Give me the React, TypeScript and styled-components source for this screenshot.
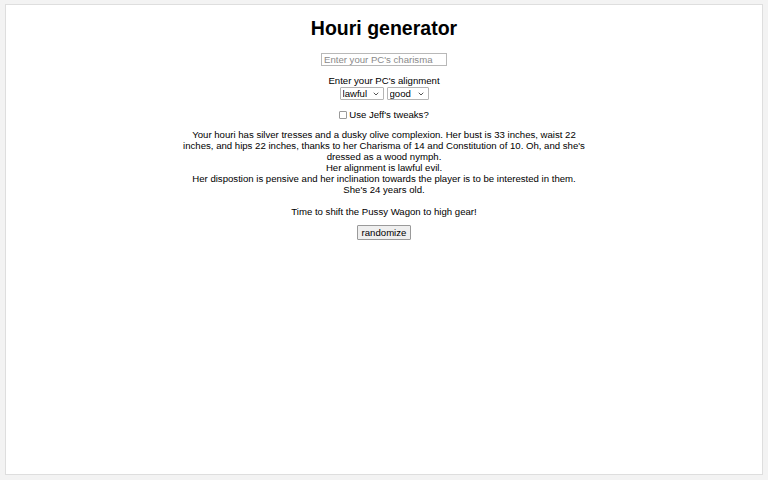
import React, { useState } from 'react';
import styled, { createGlobalStyle } from 'styled-components';
import { ChevronDown } from 'lucide-react';

const GlobalStyle = createGlobalStyle`
  html, body {
    margin: 0;
    padding: 0;
    background: #f3f3f3;
  }
  body {
    font-family: "Liberation Sans", Arial, sans-serif;
    font-size: 9.6px;
    color: #000;
  }
`;

const Page = styled.div`
  padding: 4px 5px 5px;
  height: 480px;
  box-sizing: border-box;
`;

const Panel = styled.main`
  background: #fff;
  border: 1px solid #dedede;
  height: 100%;
  box-sizing: border-box;
  display: flex;
  flex-direction: column;
  align-items: center;
  text-align: center;
  padding-top: 12px;
`;

const Title = styled.h1`
  font-size: 19.5px;
  font-weight: bold;
  margin: 0 0 13px;
`;

const CharismaInput = styled.input`
  font-family: inherit;
  font-size: 9.6px;
  width: 126px;
  height: 13px;
  box-sizing: border-box;
  border: 1px solid #b8b8b8;
  padding: 0 2px;
  margin-bottom: 9px;
  &::placeholder {
    color: #8a8a8a;
  }
`;

const Field = styled.div`
  margin-bottom: 9px;
  line-height: 11px;
`;

const SelectRow = styled.div`
  display: flex;
  justify-content: center;
  gap: 3px;
  margin-top: 1px;
`;

const SelectWrap = styled.span<{ $w: number }>`
  position: relative;
  display: inline-block;
  width: ${(p) => p.$w}px;
  height: 13px;

  svg {
    position: absolute;
    right: 4px;
    top: 3px;
    width: 8px;
    height: 8px;
    pointer-events: none;
    color: #333;
  }
`;

const Select = styled.select`
  appearance: none;
  font-family: inherit;
  font-size: 9.6px;
  width: 100%;
  height: 13px;
  line-height: 11px;
  border: 1px solid #b5b5b5;
  border-radius: 1px;
  background: #fff;
  padding: 0 0 0 2px;
  margin: 0;
  color: #000;
`;

const CheckRow = styled.label`
  display: flex;
  align-items: center;
  gap: 2px;
  margin-bottom: 9px;
  line-height: 11px;
`;

const Box = styled.input`
  appearance: none;
  width: 8px;
  height: 8px;
  margin: 0;
  border: 1px solid #9a9a9a;
  border-radius: 1px;
  background: #fff;
`;

const Description = styled.p`
  width: 402px;
  margin: 0 0 11px;
  line-height: 11px;
`;

const Tagline = styled.p`
  margin: 0 0 8px;
  line-height: 11px;
`;

const Button = styled.button`
  font-family: inherit;
  font-size: 9.6px;
  height: 15px;
  padding: 0 4px;
  border: 1px solid #9a9a9a;
  border-radius: 1px;
  background: #efefef;
  color: #000;
`;

export default function App() {
  const [law, setLaw] = useState('lawful');
  const [good, setGood] = useState('good');

  return (
    <>
      <GlobalStyle />
      <Page>
        <Panel>
          <Title>Houri generator</Title>
          <CharismaInput placeholder="Enter your PC's charisma" />
          <Field>
            Enter your PC's alignment
            <SelectRow>
              <SelectWrap $w={44}>
                <Select value={law} onChange={(e) => setLaw(e.target.value)}>
                  <option value="lawful">lawful</option>
                  <option value="neutral">neutral</option>
                  <option value="chaotic">chaotic</option>
                </Select>
                <ChevronDown strokeWidth={2.5} />
              </SelectWrap>
              <SelectWrap $w={42}>
                <Select value={good} onChange={(e) => setGood(e.target.value)}>
                  <option value="good">good</option>
                  <option value="neutral">neutral</option>
                  <option value="evil">evil</option>
                </Select>
                <ChevronDown strokeWidth={2.5} />
              </SelectWrap>
            </SelectRow>
          </Field>
          <CheckRow>
            <Box type="checkbox" />
            Use Jeff's tweaks?
          </CheckRow>
          <Description>
            Your houri has silver tresses and a dusky olive complexion. Her bust is 33 inches, waist 22
            inches, and hips 22 inches, thanks to her Charisma of 14 and Constitution of 10. Oh, and she's
            dressed as a wood nymph.
            <br />
            Her alignment is lawful evil.
            <br />
            Her dispostion is pensive and her inclination towards the player is to be interested in them.
            <br />
            She's 24 years old.
          </Description>
          <Tagline>Time to shift the Pussy Wagon to high gear!</Tagline>
          <Button>randomize</Button>
        </Panel>
      </Page>
    </>
  );
}
